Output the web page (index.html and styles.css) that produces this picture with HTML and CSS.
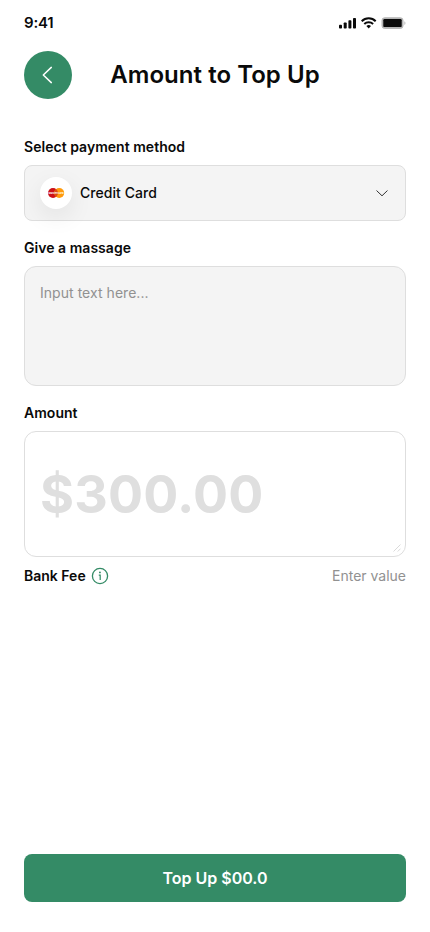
FILE: index.html
```html
<!DOCTYPE html>
<html lang="en">
<head>
<meta charset="utf-8">
<meta name="viewport" content="width=device-width, initial-scale=1">
<title>Amount to Top Up</title>
<link rel="stylesheet" href="styles.css">
</head>
<body>
<div class="screen">
  <div class="status">
    <span class="time">9:41</span>
    <svg class="status-icons" width="68" height="14" viewBox="0 0 68 14">
      <g fill="#0a0a0a">
        <rect x="0" y="8.7" width="3" height="3.8" rx=".8"/>
        <rect x="4.7" y="6.5" width="3" height="6" rx=".8"/>
        <rect x="9.4" y="4.2" width="3" height="8.3" rx=".8"/>
        <rect x="14" y="1.9" width="3" height="10.6" rx=".8"/>
      </g>
      <g fill="none" stroke="#0a0a0a" stroke-width="2">
        <path d="M22.7 5.2a10 10 0 0 1 14 0"/>
        <path d="M25.3 8a6.4 6.4 0 0 1 8.8 0"/>
      </g>
      <path d="M27.4 10.1a3.4 3.4 0 0 1 4.6 0l-2.3 2.3z" fill="#0a0a0a"/>
      <rect x="43" y="1.8" width="21" height="10.6" rx="2.6" fill="#b5b5b5" stroke="#b5b5b5"/>
      <rect x="44.3" y="3.1" width="18.4" height="8" rx="1.2" fill="#0a0a0a"/>
      <path d="M65.4 5.2c1.4.5 1.4 3.3 0 3.8z" fill="#b5b5b5"/>
    </svg>
  </div>

  <header class="header">
    <button class="back" aria-label="Back">
      <svg width="24" height="24" viewBox="0 0 24 24" fill="none" stroke="#fff" stroke-width="1.5" stroke-linecap="round" stroke-linejoin="round"><path d="M15.3 4.4 7.3 12l8 7.6"/></svg>
    </button>
    <h1>Amount to Top Up</h1>
  </header>

  <main class="form">
    <section class="field">
      <h2>Select payment method</h2>
      <div class="select">
        <span class="card-logo">
          <svg width="32" height="32" viewBox="-7 -10 32 32">
            <circle cx="6" cy="6" r="5" fill="#cc1018"/>
            <circle cx="12.2" cy="6" r="5" fill="#ff9a0c"/>
            <path d="M9.1 2.1a5 5 0 0 1 0 7.8 5 5 0 0 1 0-7.8z" fill="#dc4b12"/>
            <text class="logo-text" x="9.1" y="7.4" text-anchor="middle">MasterCard</text>
          </svg>
        </span>
        <span class="select-value">Credit Card</span>
        <svg class="chevron" width="16" height="16" viewBox="0 0 16 16" fill="none" stroke="#333" stroke-linecap="round" stroke-linejoin="round"><path d="m2.8 5.8 5.2 5 5.2-5"/></svg>
      </div>
    </section>

    <section class="field">
      <h2>Give a massage</h2>
      <div class="message">Input text here...</div>
    </section>

    <section class="field">
      <h2>Amount</h2>
      <div class="amount">
        <span>$300.00</span>
        <svg class="grip" width="8" height="8" viewBox="0 0 8 8" stroke="#d6d6d6" stroke-width=".9"><path d="M.5 7.5l7-7M4.7 7.5l2.8-2.8"/></svg>
      </div>
      <div class="fee">
        <span class="fee-label">Bank Fee</span>
        <svg width="18" height="18" viewBox="0 0 18 18" fill="none" stroke="#348b66"><circle cx="9" cy="9" r="7.6" stroke-width="1.3"/><path d="M7.8 8.1h1.4V13" stroke-width="1.2"/><circle cx="8.9" cy="5.4" r=".95" fill="#348b66" stroke="none"/></svg>
        <span class="fee-value">Enter value</span>
      </div>
    </section>
  </main>

  <button class="submit">Top Up $00.0</button>
</div>
</body>
</html>
```
FILE: styles.css
```css
* { box-sizing: border-box; }

body {
  margin: 0;
  background: #fff;
  color: #0a0a0a;
  font-family: Inter, "Liberation Sans", sans-serif;
}

h1, h2 { margin: 0; }

button {
  border: 0;
  padding: 0;
  font-family: inherit;
}

svg { display: block; flex: none; }

.screen {
  display: flex;
  flex-direction: column;
  height: 932px;
  padding: 0 24px 30px;
}

.status {
  display: flex;
  align-items: center;
  justify-content: space-between;
  height: 51px;
  padding-bottom: 6px;
}

.time {
  font-size: 15px;
  font-weight: 600;
  line-height: 20px;
  letter-spacing: -0.2px;
}

.status-icons { margin-right: -1px; }

.header {
  display: grid;
  grid-template-columns: 48px 1fr 48px;
  align-items: center;
  height: 48px;
}

.back {
  display: flex;
  align-items: center;
  justify-content: center;
  width: 48px;
  height: 48px;
  border-radius: 50%;
  background: #348b66;
}

.header h1 {
  font-size: 24px;
  font-weight: 600;
  line-height: 32px;
  letter-spacing: 0.04px;
  text-align: center;
  white-space: nowrap;
}

.form {
  display: flex;
  flex-direction: column;
  gap: 16px;
  margin-top: 37px;
}

.field h2 {
  margin-bottom: 7px;
  font-size: 14px;
  font-weight: 600;
  line-height: 22px;
  letter-spacing: 0.03px;
}

.select {
  display: flex;
  align-items: center;
  height: 56px;
  padding: 0 15px;
  border: 1px solid #dedede;
  border-radius: 8px;
  background: #f4f4f4;
}

.card-logo {
  display: flex;
  align-items: center;
  justify-content: center;
  width: 32px;
  height: 32px;
  border-radius: 50%;
  background: #fff;
  box-shadow: 0 8px 24px rgba(0, 0, 0, 0.08);
}

.logo-text {
  fill: #fff;
  font-size: 2.6px;
  font-weight: 700;
}

.select-value {
  margin-left: 8px;
  font-size: 14px;
  font-weight: 500;
  line-height: 20px;
  letter-spacing: 0.05px;
}

.chevron { margin-left: auto; }

.message {
  height: 120px;
  padding: 15px;
  border: 1px solid #dedede;
  border-radius: 12px;
  background: #f4f4f4;
  color: #919191;
  font-size: 14px;
  line-height: 22px;
  letter-spacing: 0.04px;
}

.amount {
  position: relative;
  display: flex;
  align-items: center;
  height: 126px;
  padding: 0 15px;
  border: 1px solid #dedede;
  border-radius: 12px;
  color: #dfdfdf;
  font-size: 52px;
  font-weight: 700;
  letter-spacing: 0.2px;
}

.grip {
  position: absolute;
  right: 4px;
  bottom: 4px;
}

.fee {
  display: flex;
  align-items: center;
  height: 22px;
  margin-top: 8px;
  font-size: 14px;
  line-height: 18px;
}

.fee span { margin-top: -1px; }

.fee svg { margin-top: -1px; }

.fee-label {
  margin-right: 5px;
  font-weight: 600;
}

.fee .fee-value {
  margin-left: auto;
  color: #919191;
}

.submit {
  height: 48px;
  margin-top: auto;
  border-radius: 8px;
  background: #348b66;
  color: #fff;
  font-size: 16px;
  font-weight: 600;
}
```
